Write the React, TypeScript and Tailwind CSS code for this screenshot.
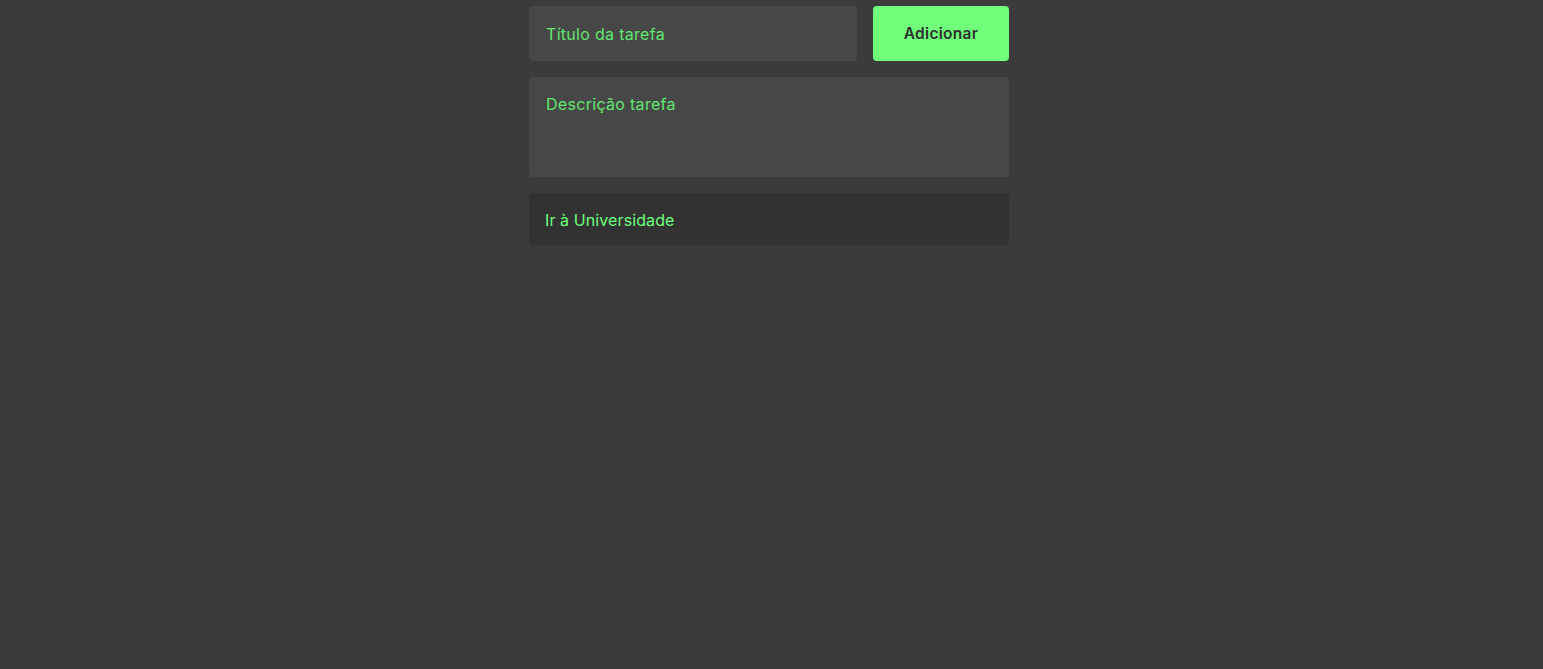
import { useState } from "react";

interface Task {
  id: number;
  title: string;
  description: string;
}

const App = () => {
  const [title, setTitle] = useState("");
  const [description, setDescription] = useState("");
  const [tasks, setTasks] = useState<Task[]>([
    { id: 1, title: "Ir à Universidade", description: "" },
  ]);

  const addTask = () => {
    if (!title.trim()) return;
    setTasks((items) => [...items, { id: Date.now(), title, description }]);
    setTitle("");
    setDescription("");
  };

  return (
    <div className="min-h-screen bg-[#3b3b3b] font-['Inter','Liberation_Sans',sans-serif]">
      <div className="flex justify-center pr-[5px] pt-[6px]">
        <div className="flex w-[480px] flex-col gap-4">
          {/* Formulário */}
          <div className="flex gap-4">
            <input
              value={title}
              onChange={(e) => setTitle(e.target.value)}
              placeholder="Título da tarefa"
              className="h-[55px] flex-1 rounded bg-[#474747] px-[17px] text-[16px] tracking-[0.3px] text-[#6cff7a] placeholder:text-[#62e870] outline-none"
            />
            <button
              onClick={addTask}
              className="h-[55px] w-[136px] rounded bg-[#6fff7a] pt-px text-[15.5px] font-semibold tracking-[0.3px] text-[#2e2e2e]"
            >
              Adicionar
            </button>
          </div>
          <textarea
            value={description}
            onChange={(e) => setDescription(e.target.value)}
            placeholder="Descrição tarefa"
            className="h-[100px] resize-none rounded bg-[#474747] px-[17px] pt-[15px] text-[16px] tracking-[0.3px] text-[#6cff7a] placeholder:text-[#62e870] outline-none"
          />

          {/* Lista de tarefas */}
          {tasks.map((task) => (
            <div
              key={task.id}
              className="flex h-[52px] items-center rounded bg-[#323232] px-4 pt-px text-[16px] tracking-[0.1px] text-[#6cff7a]"
            >
              {task.title}
            </div>
          ))}
        </div>
      </div>
    </div>
  );
};

export default App;
